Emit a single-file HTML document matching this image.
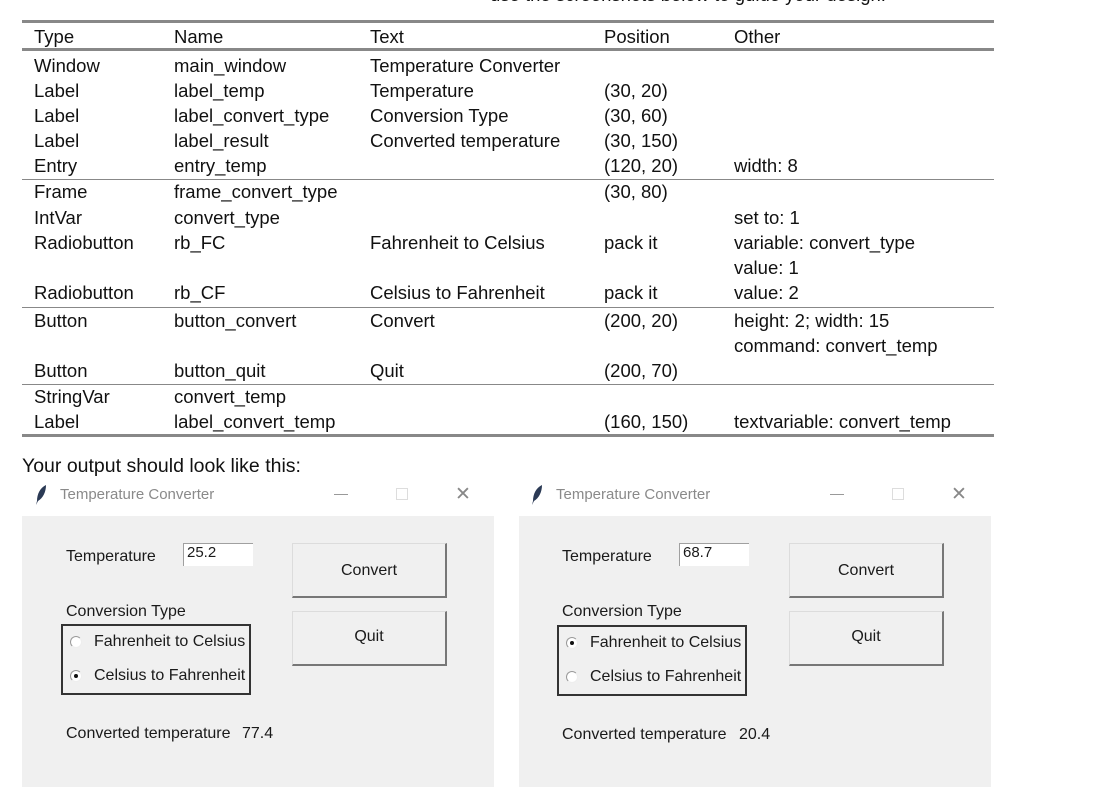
<!DOCTYPE html>
<html><head><meta charset="utf-8"><style>
*{margin:0;padding:0;box-sizing:border-box}
body{width:1094px;height:810px;background:#fff;position:relative;overflow:hidden;font-family:"Liberation Sans",sans-serif;color:#111}
.t{position:absolute;font-size:18.5px;line-height:20px;white-space:nowrap}
.hl{position:absolute;left:22px;width:972px;background:#888}
.w{position:absolute;font-size:16px;line-height:18px;white-space:nowrap;color:#1a1a1a}
.title{position:absolute;font-size:15px;color:#8a8a8a;white-space:nowrap}
.panel{position:absolute;background:#f0f0f0}
.entry{position:absolute;background:#fff;border-top:1px solid #a0a0a0;border-left:1px solid #a0a0a0;font-size:15px;line-height:18px;padding-left:3px;color:#1a1a1a}
.btn{position:absolute;background:#f0f0f0;border:1px solid #dcdcdc;border-right:2px solid #777;border-bottom:2px solid #777;text-align:center;font-size:16px;color:#1a1a1a}
.frame{position:absolute;border:2px solid #333}
.rad{position:absolute;width:12px;height:12px;border-radius:50%;border:1px solid #999;border-right-color:#eee;border-bottom-color:#eee;background:#fff}
.rad.on::after{content:"";position:absolute;left:3px;top:3px;width:4px;height:4px;border-radius:50%;background:#111}
</style></head><body>
<div class="t" style="left:490px;top:-15px">use the screenshots below to guide your design.</div>
<div class="hl" style="top:20px;height:3px"></div>
<div class="hl" style="top:48px;height:3px"></div>
<div class="hl" style="top:179px;height:1px"></div>
<div class="hl" style="top:307px;height:1px"></div>
<div class="hl" style="top:384px;height:1px"></div>
<div class="hl" style="top:434px;height:3px"></div>

<div class="t" style="left:34px;top:27px">Type</div><div class="t" style="left:174px;top:27px">Name</div><div class="t" style="left:370px;top:27px">Text</div><div class="t" style="left:604px;top:27px">Position</div><div class="t" style="left:734px;top:27px">Other</div>

<div class="t" style="left:34px;top:56px">Window</div><div class="t" style="left:174px;top:56px">main_window</div><div class="t" style="left:370px;top:56px">Temperature Converter</div>
<div class="t" style="left:34px;top:81px">Label</div><div class="t" style="left:174px;top:81px">label_temp</div><div class="t" style="left:370px;top:81px">Temperature</div><div class="t" style="left:604px;top:81px">(30, 20)</div>
<div class="t" style="left:34px;top:106px">Label</div><div class="t" style="left:174px;top:106px">label_convert_type</div><div class="t" style="left:370px;top:106px">Conversion Type</div><div class="t" style="left:604px;top:106px">(30, 60)</div>
<div class="t" style="left:34px;top:131px">Label</div><div class="t" style="left:174px;top:131px">label_result</div><div class="t" style="left:370px;top:131px">Converted temperature</div><div class="t" style="left:604px;top:131px">(30, 150)</div>
<div class="t" style="left:34px;top:156px">Entry</div><div class="t" style="left:174px;top:156px">entry_temp</div><div class="t" style="left:604px;top:156px">(120, 20)</div><div class="t" style="left:734px;top:156px">width: 8</div>

<div class="t" style="left:34px;top:182px">Frame</div><div class="t" style="left:174px;top:182px">frame_convert_type</div><div class="t" style="left:604px;top:182px">(30, 80)</div>
<div class="t" style="left:34px;top:208px">IntVar</div><div class="t" style="left:174px;top:208px">convert_type</div><div class="t" style="left:734px;top:208px">set to: 1</div>
<div class="t" style="left:34px;top:233px">Radiobutton</div><div class="t" style="left:174px;top:233px">rb_FC</div><div class="t" style="left:370px;top:233px">Fahrenheit to Celsius</div><div class="t" style="left:604px;top:233px">pack it</div><div class="t" style="left:734px;top:233px">variable: convert_type</div>
<div class="t" style="left:734px;top:258px">value: 1</div>
<div class="t" style="left:34px;top:283px">Radiobutton</div><div class="t" style="left:174px;top:283px">rb_CF</div><div class="t" style="left:370px;top:283px">Celsius to Fahrenheit</div><div class="t" style="left:604px;top:283px">pack it</div><div class="t" style="left:734px;top:283px">value: 2</div>

<div class="t" style="left:34px;top:311px">Button</div><div class="t" style="left:174px;top:311px">button_convert</div><div class="t" style="left:370px;top:311px">Convert</div><div class="t" style="left:604px;top:311px">(200, 20)</div><div class="t" style="left:734px;top:311px">height: 2; width: 15</div>
<div class="t" style="left:734px;top:336px">command: convert_temp</div>
<div class="t" style="left:34px;top:361px">Button</div><div class="t" style="left:174px;top:361px">button_quit</div><div class="t" style="left:370px;top:361px">Quit</div><div class="t" style="left:604px;top:361px">(200, 70)</div>

<div class="t" style="left:34px;top:387px">StringVar</div><div class="t" style="left:174px;top:387px">convert_temp</div>
<div class="t" style="left:34px;top:412px">Label</div><div class="t" style="left:174px;top:412px">label_convert_temp</div><div class="t" style="left:604px;top:412px">(160, 150)</div><div class="t" style="left:734px;top:412px">textvariable: convert_temp</div>

<div class="t" style="left:22px;top:456px;font-size:19.5px">Your output should look like this:</div>

<!-- left window -->
<svg style="position:absolute;left:34px;top:484px" width="14" height="22" viewBox="0 0 14 22"><path d="M12 1 C6 4 3 10 3 17 L2 21 L4 17 C9 14 12 8 12 1Z" fill="#2b3a55"/></svg>
<div class="title" style="left:60px;top:486px">Temperature Converter</div>
<div style="position:absolute;left:334px;top:494px;width:14px;height:1px;background:#999"></div>
<div style="position:absolute;left:396px;top:488px;width:12px;height:12px;border:1px solid #ddd"></div>
<div class="title" style="left:455px;top:483px;font-size:19px;color:#888">✕</div>
<div class="panel" style="left:22px;top:516px;width:472px;height:271px"></div>
<div class="w" style="left:66px;top:548px">Temperature</div>
<div class="entry" style="left:183px;top:543px;width:70px;height:23px">25.2</div>
<div class="btn" style="left:292px;top:543px;width:155px;height:55px;line-height:53px">Convert</div>
<div class="btn" style="left:292px;top:611px;width:155px;height:55px;line-height:50px">Quit</div>
<div class="w" style="left:66px;top:603px">Conversion Type</div>
<div class="frame" style="left:61px;top:624px;width:190px;height:71px"></div>
<div class="rad" style="left:70px;top:636px"></div>
<div class="w" style="left:94px;top:633px">Fahrenheit to Celsius</div>
<div class="rad on" style="left:70px;top:670px"></div>
<div class="w" style="left:94px;top:667px">Celsius to Fahrenheit</div>
<div class="w" style="left:66px;top:725px">Converted temperature</div>
<div class="w" style="left:242px;top:725px">77.4</div>

<!-- right window -->
<svg style="position:absolute;left:530px;top:484px" width="14" height="22" viewBox="0 0 14 22"><path d="M12 1 C6 4 3 10 3 17 L2 21 L4 17 C9 14 12 8 12 1Z" fill="#2b3a55"/></svg>
<div class="title" style="left:556px;top:486px">Temperature Converter</div>
<div style="position:absolute;left:830px;top:494px;width:14px;height:1px;background:#999"></div>
<div style="position:absolute;left:892px;top:488px;width:12px;height:12px;border:1px solid #ddd"></div>
<div class="title" style="left:951px;top:483px;font-size:19px;color:#888">✕</div>
<div class="panel" style="left:519px;top:516px;width:472px;height:271px"></div>
<div class="w" style="left:562px;top:548px">Temperature</div>
<div class="entry" style="left:679px;top:543px;width:70px;height:23px">68.7</div>
<div class="btn" style="left:789px;top:543px;width:155px;height:55px;line-height:53px">Convert</div>
<div class="btn" style="left:789px;top:611px;width:155px;height:55px;line-height:50px">Quit</div>
<div class="w" style="left:562px;top:603px">Conversion Type</div>
<div class="frame" style="left:557px;top:625px;width:190px;height:71px"></div>
<div class="rad on" style="left:566px;top:637px"></div>
<div class="w" style="left:590px;top:634px">Fahrenheit to Celsius</div>
<div class="rad" style="left:566px;top:671px"></div>
<div class="w" style="left:590px;top:668px">Celsius to Fahrenheit</div>
<div class="w" style="left:562px;top:726px">Converted temperature</div>
<div class="w" style="left:739px;top:726px">20.4</div>
</body></html>
